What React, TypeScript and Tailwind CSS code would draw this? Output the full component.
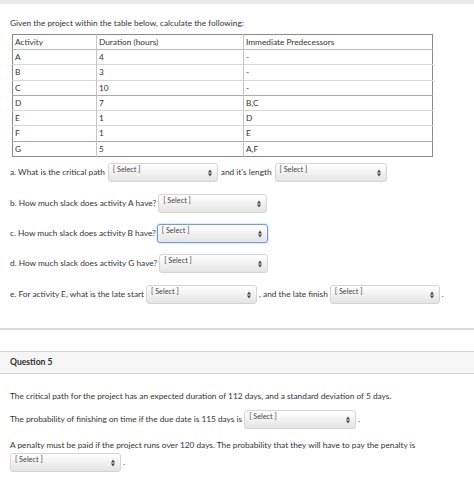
import React from 'react'

const rows = [
  ['A', '4', '-'],
  ['B', '3', '-'],
  ['C', '10', '-'],
  ['D', '7', 'B,C'],
  ['E', '1', 'D'],
  ['F', '1', 'E'],
  ['G', '5', 'A,F'],
]

function Select({ width = 110, focused = false }: { width?: number; focused?: boolean }) {
  return (
    <span
      className={
        'relative inline-block h-[19px] shrink-0 rounded-[3px] border bg-gradient-to-b from-white to-[#e4e4e4] ' +
        (focused ? 'border-[#6d9fd6] shadow-[0_0_2px_#8ab4e6]' : 'border-[#d4d4d4]')
      }
      style={{ width }}
    >
      <span className="absolute left-[4px] top-[2px] text-[7.3px] leading-none text-[#444]">[ Select ]</span>
      <span className="absolute right-[5px] top-1/2 flex -translate-y-1/2 flex-col items-center gap-[1px]">
        <span className="h-0 w-0 border-x-[2px] border-b-[3px] border-x-transparent border-b-[#444]" />
        <span className="h-0 w-0 border-x-[2px] border-t-[3px] border-x-transparent border-t-[#444]" />
      </span>
    </span>
  )
}

export default function App() {
  return (
    <div className="h-[486px] w-[474px] overflow-hidden bg-white text-[8.3px] text-[#333]" style={{ fontFamily: 'Lato, "Open Sans", sans-serif' }}>
      <div className="h-[4px] bg-[#ebebeb]" />

      <div className="pl-[10px] pr-[10px]">
        <p className="mt-[14px] leading-[10px]">Given the project within the table below, calculate the following:</p>

        <table className="ml-[2px] mt-[6px] w-[421px] border-collapse border border-[#8a8a8a]">
          <tbody>
            <tr className="h-[15px] border-b border-[#bbb]">
              <td className="w-[84px] border-r border-[#c4c4c4] pl-[2px]">Activity</td>
              <td className="w-[147px] border-r border-[#c4c4c4] pl-[2px]">Duration (hours)</td>
              <td className="pl-[2px]">Immediate Predecessors</td>
            </tr>
            {rows.map((r, i) => (
              <tr key={r[0]} className={'h-[15.3px] ' + (i < rows.length - 1 ? (i === 2 || i === 5 ? 'border-b border-[#aaa]' : 'border-b border-[#d6d6d6]') : '')}>
                <td className="border-r border-[#c4c4c4] pl-[2px]">{r[0]}</td>
                <td className="border-r border-[#c4c4c4] pl-[2px]">{r[1]}</td>
                <td className="pl-[2px]">{r[2]}</td>
              </tr>
            ))}
          </tbody>
        </table>

        <div className="mt-[6px] flex items-center gap-[3px]">
          <span>a. What is the critical path</span>
          <Select width={110} />
          <span>and it's length</span>
          <Select width={112} />
        </div>

        <div className="mt-[12px] flex items-center gap-[2px]">
          <span>b. How much slack does activity A have?</span>
          <Select width={109} />
        </div>

        <div className="mt-[11px] flex items-center gap-[1px]">
          <span>c. How much slack does activity B have?</span>
          <Select width={111} focused />
        </div>

        <div className="mt-[11px] flex items-center gap-[2px]">
          <span>d. How much slack does activity G have?</span>
          <Select width={109} />
        </div>

        <div className="mt-[12px] flex items-center gap-[2px]">
          <span>e. For activity E, what is the late start</span>
          <Select width={111} />
          <span>, and the late finish</span>
          <Select width={110} />
          <span>.</span>
        </div>
      </div>

      <div className="mt-[24px] h-[2px] bg-[#d8d8d8]" />
      <div className="h-[21px]" />
      <div className="flex h-[23px] items-center border-y border-[#d2d2d2] bg-[#f5f5f5] pl-[10px] text-[8.6px] font-bold text-[#2d2d2d]">
        Question 5
      </div>

      <div className="pl-[10px]">
        <p className="mt-[17px] leading-[10px]">
          The critical path for the project has an expected duration of 112 days, and a standard deviation of 5 days.
        </p>
        <div className="mt-[9px] flex items-center gap-[2px]">
          <span>The probability of finishing on time if the due date is 115 days is</span>
          <Select width={112} />
          <span>.</span>
        </div>
        <p className="mt-[11px] leading-[10px]">
          A penalty must be paid if the project runs over 120 days. The probability that they will have to pay the penalty is
        </p>
        <div className="mt-[3px] flex items-center gap-[2px]">
          <Select width={111} />
          <span>.</span>
        </div>
      </div>
    </div>
  )
}
